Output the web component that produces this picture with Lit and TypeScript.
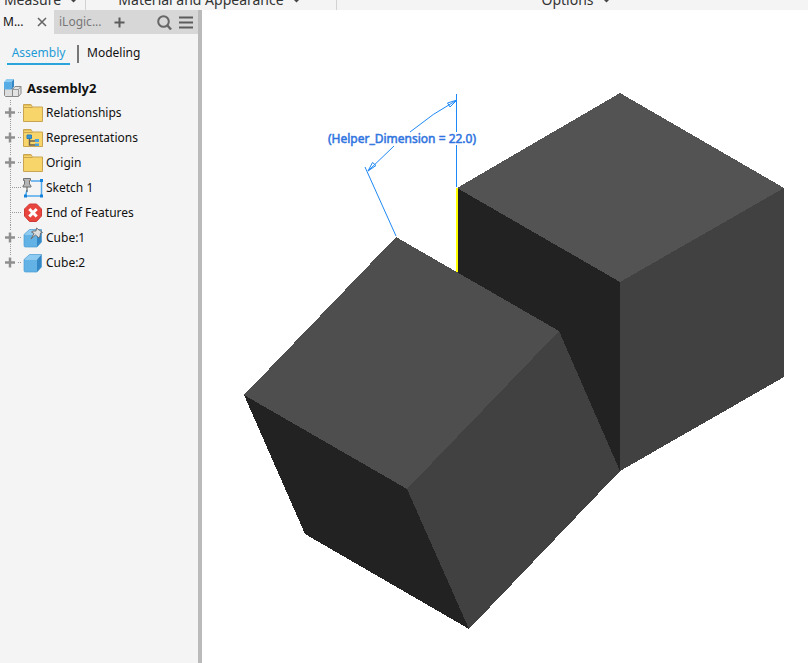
import { LitElement, html, svg, css, nothing } from "lit";
import { customElement, property, state } from "lit/decorators.js";
import { classMap } from "lit/directives/class-map.js";

type IconName = "folder" | "views" | "sketch" | "end" | "pinned" | "cube";

interface TreeNode {
  label: string;
  icon: IconName;
  expandable: boolean;
}

const NODES: TreeNode[] = [
  { label: "Relationships", icon: "folder", expandable: true },
  { label: "Representations", icon: "views", expandable: true },
  { label: "Origin", icon: "folder", expandable: true },
  { label: "Sketch 1", icon: "sketch", expandable: false },
  { label: "End of Features", icon: "end", expandable: false },
  { label: "Cube:1", icon: "pinned", expandable: true },
  { label: "Cube:2", icon: "cube", expandable: true },
];

const folder = svg`
  <path d="M.5 18.5V1.5H8L9.500 4H19.500V18.500Z" fill="#f8d56b" stroke="#c9a552"/>
  <path d="M1 4.500H9.500" stroke="#c9a552"/>
  <path d="M1 2.500H8" stroke="#e6bf58"/>`;

const cube = svg`
  <path d="M1 6.500 6.500 1.500H18.500L14 6.500Z" fill="#8dcbf3"/>
  <path d="M1 6.500H14V19H2.500Q1 19 1 17.500Z" fill="#62b2e6"/>
  <path d="M14 6.500 18.500 1.500V14L14 19Z" fill="#3387c4"/>
  <path d="M1 6.500 6.500 1.500H18.500V14L14 19H2.500Q1 19 1 17.500Z" fill="none" stroke="#4b9bd2" stroke-width=".7"/>`;

const ICONS: Record<IconName, unknown> = {
  folder,
  views: svg`${folder}
    <path d="M6.500 10V17H12M6.500 13H12" fill="none" stroke="#6b6350" stroke-width="1.500"/>
    <path d="M4 7H8.500V10.500H4Z" fill="#3c95d2" stroke="#2b7fb9"/>
    <path d="M12 11H16V14H12ZM12 15.500H16V18H12Z" fill="#4aa3dc"/>`,
  sketch: svg`
    <path d="M8 3H18.500V18H2.500L4 12" fill="none" stroke="#4fa8ec" stroke-width="1.500"/>
    <path d="M17 1H20V4H17ZM1 16.500H4V19.500H1ZM17 16.500H20V19.500H17Z" fill="#1583dc"/>
    <path d="M.5 .5H7.500V2.500H6.500V6L8 8V9H0V8L1.500 6V2.500H.5Z" fill="#b5b5b5" stroke="#666" stroke-width=".9"/>
    <path d="M4 9V14" stroke="#555"/>`,
  end: svg`
    <path d="M6.500 1H13.500L18.500 6V13L13.500 18.500H6.500L1.500 13V6Z" fill="#e9453f" stroke="#cf3c38"/>
    <path d="M6.300 6 13.700 13.500M13.700 6 6.300 13.500" stroke="#fff" stroke-width="3"/>`,
  pinned: svg`${cube}
    <path d="M13.500 0 19.500 4.500 17.500 5 17 8.500 15.500 9.500 12.500 7 8 11 11 5.500 8.500 4 10 3 13 3Z" fill="#dedede" stroke="#666" stroke-width=".9"/>`,
  cube,
};

const caret = html`<svg class="caret" viewBox="0 0 7 6" aria-hidden="true"><path d="M0 1H7V2L3.500 5.500 0 2Z" fill="#444" /></svg>`;

@customElement("ribbon-bar")
export class RibbonBar extends LitElement {
  static styles = css`
    :host {
      display: flex;
      height: 10px;
      overflow: hidden;
      background: #f4f4f4;
      font: 14px/20px "Noto Sans", sans-serif;
    }
    .group {
      display: flex;
      justify-content: center;
      align-items: flex-end;
      box-sizing: border-box;
      border-right: 1px solid #d2d2d2;
      padding-right: 4px;
    }
    .measure { flex: 0 0 86px; }
    .material { flex: 0 0 251px; }
    .options { flex: 1; border-right: 0; padding: 0 0 0 6px; }
    button {
      display: flex;
      align-items: center;
      gap: 9px;
      padding: 0;
      border: 0;
      background: none;
      color: #333;
      font: inherit;
      white-space: nowrap;
    }
    .caret { width: 7px; height: 6px; }
  `;
  render() {
    return html`
      <div class="group measure"><button>Measure ${caret}</button></div>
      <div class="group material"><button>Material and Appearance ${caret}</button></div>
      <div class="group options"><button>Options ${caret}</button></div>
    `;
  }
}

@customElement("tree-row")
export class TreeRow extends LitElement {
  static styles = css`
    :host {
      display: flex;
      align-items: center;
      height: 25px;
    }
    button { padding: 0; border: 0; background: none; }
    .branch { display: block; width: 23px; height: 25px; }
    .icon { width: 20px; height: 20px; margin-right: 3px; overflow: visible; }
  `;
  @property({ attribute: false }) node!: TreeNode;
  @property({ type: Boolean }) last = false;

  render() {
    const { label, icon, expandable } = this.node;
    const lines = expandable
      ? this.last ? "M10.500 0V6M18 12.500H22" : "M10.500 0V6M10.500 19V25M18 12.500H22"
      : "M10.500 0V25M12 12.500H22";
    const branch = html`<svg class="branch" viewBox="0 0 23 25" aria-hidden="true">
      <path d=${lines} stroke="#999" stroke-dasharray="1 1" />
      ${expandable ? svg`<path d="M5 12.500H15M10 7.500V17.500" stroke="#8f8f8f" stroke-width="2.500"/>` : nothing}
    </svg>`;
    return html`
      ${expandable ? html`<button aria-label="Expand ${label}">${branch}</button>` : branch}
      <svg class="icon" viewBox="0 0 20 20" fill="none" aria-hidden="true">${ICONS[icon]}</svg>
      <span>${label}</span>
    `;
  }
}

@customElement("model-browser")
export class ModelBrowser extends LitElement {
  static styles = css`
    :host {
      display: block;
      flex: 0 0 198px;
      border-right: 4px solid #bababa;
      background: #f4f4f4;
      color: #111;
      font: 12px/20px "Noto Sans", sans-serif;
    }
    button {
      padding: 0;
      border: 0;
      background: none;
      color: inherit;
      font: inherit;
    }
    svg { display: block; }
    .tabs { display: flex; height: 24px; background: #d7d7d7; }
    .tab { display: flex; align-items: center; }
    .front {
      box-sizing: border-box;
      width: 54px;
      justify-content: space-between;
      padding: 0 7px 0 3px;
      background: #f4f4f4;
    }
    .back { padding-left: 5px; gap: 12px; color: #777; }
    .tools { display: flex; align-items: center; gap: 7px; margin: 0 4px 0 auto; }
    .modes {
      display: flex;
      align-items: center;
      height: 41px;
      box-sizing: border-box;
      padding: 0 7px 1px;
    }
    .mode { padding: 0 2px; height: 22px; border-bottom: 2px solid transparent; }
    .mode.on { width: 63px; color: #1e9bd7; border-color: #2ba4dc; }
    .bar { width: 2px; height: 18px; margin: 0 6px 0 7px; background: #777; }
    .root {
      display: flex;
      align-items: center;
      gap: 4px;
      height: 25px;
      padding-left: 3px;
      font-size: 13px;
      font-weight: 700;
    }
    ul { margin: 0; padding: 0; list-style: none; }
  `;
  @state() private mode = "Assembly";

  private modeButton(name: string) {
    return html`<button class=${classMap({ mode: true, on: this.mode === name })}
      @click=${() => (this.mode = name)}>${name}</button>`;
  }

  render() {
    return html`
      <div class="tabs">
        <div class="tab front">
          <button>M...</button>
          <button aria-label="Close">
            <svg width="10" height="10" viewBox="0 0 10 10"><path d="M1 1 9 9M9 1 1 9" stroke="#666" stroke-width="1.600" /></svg>
          </button>
        </div>
        <div class="tab back">
          <button>iLogic...</button>
          <button aria-label="Add tab">
            <svg width="11" height="11" viewBox="0 0 11 11"><path d="M.5 5.500H10.500M5.500 .5V10.500" stroke="#5c5c5c" stroke-width="2" /></svg>
          </button>
        </div>
        <div class="tools">
          <button aria-label="Search">
            <svg width="15" height="15" viewBox="0 0 15 15" fill="none" stroke="#666">
              <circle cx="6.500" cy="6.500" r="5.300" stroke-width="2" /><path d="M10 10 14 14.500" stroke-width="2.400" />
            </svg>
          </button>
          <button aria-label="Menu">
            <svg width="15" height="13" viewBox="0 0 15 13"><path d="M0 1.500H14M0 6.500H14M0 11.500H14" stroke="#5c5c5c" stroke-width="2" /></svg>
          </button>
        </div>
      </div>
      <div class="modes">${this.modeButton("Assembly")}<span class="bar"></span>${this.modeButton("Modeling")}</div>
      <div class="root">
        <svg width="20" height="20" viewBox="0 0 20 20" aria-hidden="true">
          <path d="M1.500 10.500H9.500V18.500H2.500L1.500 17.500Z" fill="#ddd" stroke="#888" />
          <path d="M9.500 11.500 12 8.500H18V15.500L15.500 18.500H9.500Z" fill="#e3e3e3" stroke="#888" />
          <path d="M9.500 11.500H15.500V18.500M15.500 11.500 18 8.500" fill="none" stroke="#999" />
          <path d="M1 4 3.500 1H11L8.500 4Z" fill="#8dcbf3" />
          <path d="M1 4H8.500V11.500H1Z" fill="#58ace5" />
          <path d="M8.500 4 11 1V8.500L8.500 11.500Z" fill="#3387c4" />
        </svg>
        <span>Assembly2</span>
      </div>
      <ul>
        ${NODES.map((node, i) => html`<li><tree-row .node=${node} ?last=${i === NODES.length - 1}></tree-row></li>`)}
      </ul>
    `;
  }
}

@customElement("model-view")
export class ModelView extends LitElement {
  static styles = css`
    :host { display: block; flex: 1; min-width: 0; background: #fff; }
    .scene { display: block; width: 100%; }
    .solid { shape-rendering: crispEdges; }
    .dimension { fill: none; stroke: #1e88f5; }
    .label {
      fill: #2f74e0;
      stroke: #2f74e0;
      stroke-width: 0.5;
      font: 12px "Noto Sans", sans-serif;
      text-anchor: middle;
    }
  `;
  render() {
    return html`
      <svg class="scene" viewBox="202 10 606 653" role="img" aria-label="Two cubes with an angular helper dimension">
        <g class="solid">
          <path d="M457 188 620 282V471L457 377Z" fill="#222" />
          <path d="M620 282 784 188V377L620 471Z" fill="#414141" />
          <path d="M620 93 784 188 620 282 457 188Z" fill="#535353" />
          <path d="M457 188V273" fill="none" stroke="#ff0" stroke-width="2" />
        </g>
        <g class="solid">
          <path d="M244 395 407 489 469 629 305 534Z" fill="#222" />
          <path d="M407 489 559 331 620 471 469 629Z" fill="#414141" />
          <path d="M396 237 559 331 407 489 244 395Z" fill="#4e4e4e" />
        </g>
        <g class="dimension">
          <path d="M456.500 94V132M456.500 145V187M365 167 396 236" />
          <path d="M457 100Q433 113 410 132M394 146 368 171" />
          <path d="M457 100 447.500 103 450 107ZM368 171 372.500 162.500 376 165.500Z" />
        </g>
        <text class="label" x="402" y="143">(Helper_Dimension = 22.0)</text>
      </svg>
    `;
  }
}

@customElement("app-root")
export class AppRoot extends LitElement {
  static styles = css`
    :host {
      display: flex;
      flex-direction: column;
      min-height: 100vh;
      background: #fff;
    }
    main { display: flex; flex: 1; }
  `;
  render() {
    return html`
      <ribbon-bar></ribbon-bar>
      <main>
        <model-browser></model-browser>
        <model-view></model-view>
      </main>
    `;
  }
}
